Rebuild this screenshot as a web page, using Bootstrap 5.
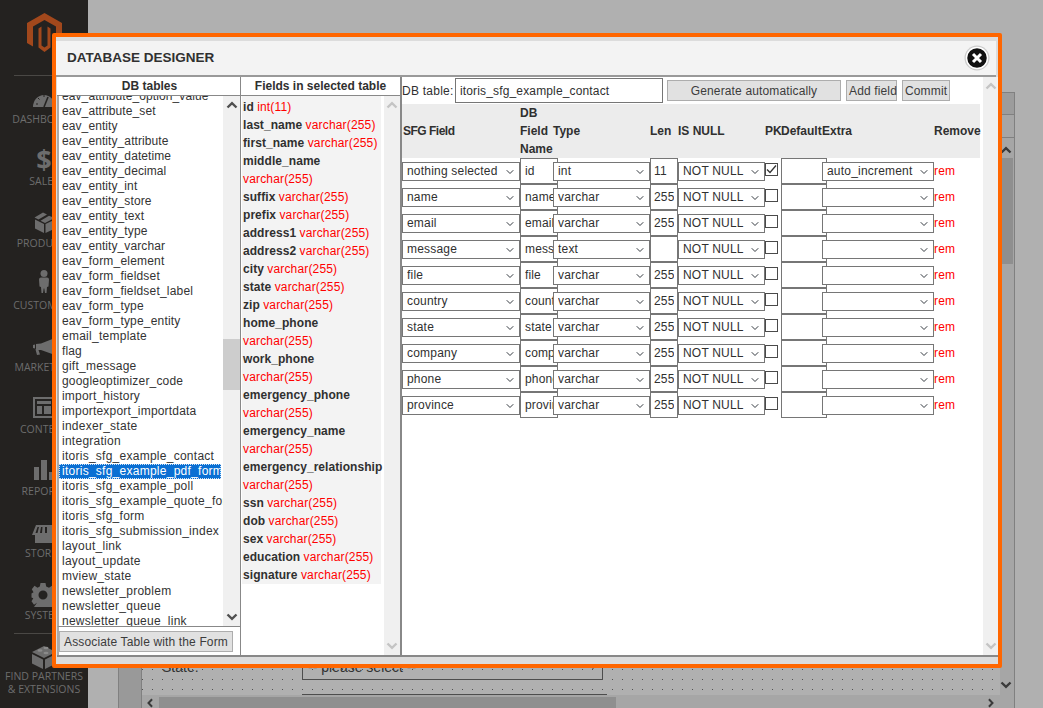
<!DOCTYPE html>
<html lang="en">
<head>
<meta charset="utf-8">
<title>Database Designer</title>
<link href="https://cdn.jsdelivr.net/npm/bootstrap@5.3.0/dist/css/bootstrap.min.css" rel="stylesheet">
<style>
html,body{height:708px;overflow:hidden}
body{background:#b0b0b0;font-family:"Liberation Sans",Arial,sans-serif;font-size:12px;color:#303030;width:1043px;position:relative}
.side{width:88px;height:708px;background:#242220;flex:none;font-family:"Open Sans",sans-serif;color:#6d6d6d;font-size:10.5px;text-align:center}
.side-logo{height:76px;padding-top:13px}
.side-logo svg{display:block}
.side-sep{height:1px;background:#4a4845;margin-left:14px;margin-top:-1px}
.side-item{height:62px;overflow:hidden}
.side-item svg{display:block;height:36px;width:88px}
.side-item span{display:block;line-height:16px;margin-top:-1px;white-space:nowrap}
.side-find{line-height:13px;white-space:nowrap;padding-top:2px}
.side-find svg{display:block;width:88px;height:34px}
.ic{fill:#6d6d6d}
.workspace{margin-top:92px;height:616px;flex:1 1 auto}
.gutter{width:30px;flex:none}
.strip{width:24px;background:#999;border-left:1px solid #808080;border-right:1px solid #808080;flex:none}
.editor{width:858px;flex:none}
.canvas{flex:1 1 auto;background-color:#b0b0b0;background-image:radial-gradient(circle at .5px .5px,#505050 .6px,transparent .8px);background-size:10px 10px;background-position:0 7px;overflow:hidden}
.canvas-label{width:160px;flex:none;padding-left:20px;line-height:26px;font-size:14px;color:#333;margin-bottom:15px}
.canvas-select.form-select{width:301px;height:26px;border:1px solid #4d4d4d;border-radius:0;background-color:transparent;font-size:14px;line-height:22px;padding:0 20px 0 5px;color:#333;margin-bottom:14px;background-position:right 4px center;background-size:10px 8px;font-family:inherit;box-shadow:none}
.canvas-line{width:305px;height:1px;background:#4d4d4d}
.hbar{height:13px;background:#a6a6a6;flex:none;padding-top:2px}
.hthumb{width:457px;background:#8f8f8f;margin-left:5px}
.hbar .chev{margin-top:1px}
.hbar .left{margin-left:4px}
.hbar .right{margin-right:5px}
.vbar{width:15px;flex:none;background:#a6a6a6;border-right:1px solid #808080}
.vhead{height:23px;border-bottom:1px solid #808080}
.vhead.dark{background:#9c9c9c;border-top:1px solid #808080}
.vthumb{height:106px;background:#8f8f8f;margin:0 1px 0 2px}
.chev{display:block;fill:none;stroke-width:2.4px}
.chev-dark{stroke:#3a3a3a}
.chev-mid{stroke:#505050}
.chev-light{stroke:#c4c4c4}
.vbar .up{margin:8px 0 4px 0}
.vbar .dn{margin-bottom:19px}
.dd{position:absolute;left:52px;top:33px;width:950px;height:635px;border:4px solid #f60;border-radius:2px;background:#dcdcdc;padding-top:4px;display:flex;flex-direction:column}
.dd-head{height:36px;flex:none;background:#f3f3f3;border-bottom:2px solid #999;margin-right:2px;padding:0 6px 0 11px}
.dd-title{font-size:13.5px;font-weight:700;color:#303030;padding-top:1px}
.dd-body{height:580px;flex:none;background:#fff;margin-left:1px;border-bottom:2px solid #888}
.col-tables{width:184px;flex:none;border-right:1px solid #888}
.col-fields{width:161px;flex:none;border-right:2px solid #888}
.col-head{height:19px;flex:none;border-bottom:1px solid #888;font-weight:700;text-align:center;line-height:18px;color:#303030}
.col-tables .col-head{padding-left:2px}
.tables-wrap{height:530px;flex:none;border-left:2px solid #aaa;overflow:hidden}
.tables-list{width:164px;flex:none;overflow:hidden;color:#333}
.tables-inner{margin-top:-7px}
.t-item{height:15px;line-height:15px;padding-left:3px;white-space:nowrap;width:162px;letter-spacing:.09px}
.t-item.ls{letter-spacing:.26px}
.t-item.ls2{letter-spacing:.19px}
.t-item.sel{background:#0a6fd3;color:#fff;overflow:hidden;outline:1px dotted #cfe3f7;outline-offset:-1px}
.sb{width:17px;flex:none;background:#f0f0f0;padding:5px 0}
.sb-thumb{height:51px;background:#cdcdcd;margin-top:230px}
.tables-foot{flex:1 1 auto;border-top:1px solid #888;border-left:2px solid #aaa;padding:4px 0 0 0}
.dd-btn{background:#e1e1e1;border:1px solid #adadad;border-radius:0;color:#3c3c3c;font-size:12px;line-height:14px;padding:0 2px;white-space:nowrap;letter-spacing:.14px}
.btn-assoc{width:174px;height:21px}
.fields-wrap{flex:1 1 auto;min-height:0}
.fields-list{width:139px;margin-left:1px;padding-top:2px;align-self:flex-start;background:#f3f3f3}
.f-line{line-height:18px;padding-left:1px}
.f-line b{color:#303030;letter-spacing:.06px}
.f-line span{color:#f00;letter-spacing:.16px}
.sb-f{width:16px;margin-left:3px}
.main{flex:1 1 auto;min-width:0}
.main-content{width:578px;flex:none}
.sb-m{width:15px;margin-left:3px}
.toolbar{height:27px}
.dd-input{border:1px solid #767676;border-radius:0;background:#fff;color:#303030;font-size:12px;padding:0 4px;height:26px;font-family:inherit;letter-spacing:.15px}
.tb-label{width:53px;white-space:nowrap;letter-spacing:.25px}
.tb-input{width:208px;height:25px}
.btn-gen{width:174px;height:21px;margin-left:4px}
.btn-add{width:51px;height:21px;margin-left:5px}
.btn-com{width:48px;height:21px;margin-left:5px}
.g-row{display:grid;grid-template-columns:118px 33px 97px 28px 87px 16px 41px 112px 46px}
.g-head{height:54px;background:#ececec;font-weight:700;align-items:center;line-height:18px;color:#303030;white-space:nowrap}
.g-first{padding-left:1px;letter-spacing:-.5px}
.g-name{white-space:normal;width:36px}
.g-rows .g-row{height:26px}
.s-box.form-select{height:19px;margin-top:4px;font-size:12px;line-height:17px;padding:0 14px 0 4px;border:1px solid #767676;border-radius:0;background-color:#fff;color:#303030;background-position:right 4px center;background-size:10px 8px;box-shadow:none;font-family:inherit;letter-spacing:.2px}
.i-name{width:38px}
.i-len{width:28px;padding:0 3px}
.i-def{width:46px}
.dd-check.form-check-input{width:13px;height:13px;margin:5px 0 0 0;border:1px solid #4a4a4a;border-radius:0;background-color:#fff}
.dd-check.form-check-input:checked{background-color:#fff;border-color:#4a4a4a;background-image:url("data:image/svg+xml,%3Csvg xmlns='http://www.w3.org/2000/svg' viewBox='0 0 13 13'%3E%3Cpath d='M2 6.5 5 9.5 11 2.5' fill='none' stroke='%23333' stroke-width='1.3'/%3E%3C/svg%3E");background-size:13px 13px}
.rem{color:#f00;line-height:26px;letter-spacing:.2px}
</style>
</head>
<body>
<svg width="0" height="0" class="position-absolute">
<symbol id="up" viewBox="0 0 12 8"><path d="M1.500 6.500 6 2.200 10.500 6.500"/></symbol>
<symbol id="down" viewBox="0 0 12 8"><path d="M1.500 1.500 6 5.800 10.500 1.500"/></symbol>
<symbol id="left" viewBox="0 0 8 12"><path d="M6.500 1.500 2.200 6 6.500 10.500"/></symbol>
<symbol id="right" viewBox="0 0 8 12"><path d="M1.500 1.500 5.800 6 1.500 10.500"/></symbol>
</svg>
<div class="d-flex">
<aside class="side">
  <div class="side-logo">
    <svg width="88" height="40" viewBox="0 13 88 40"><path fill="#a2481c" d="M44.500 13 62 23V43L56 46.500V26.500L44.500 20 33 26.500V46.500L27 43V23Z"/><path fill="#a2481c" d="M38.500 28.500 41.500 26.500V45.500L44.500 47.500 47.500 45.500V26.500L50.500 28.500V47.500L44.500 52 38.500 47.500Z"/></svg>
  </div>
  <div class="side-sep"></div>
  <div class="side-item"><svg viewBox="0 0 88 36"><path class="ic" d="M33 31a11 12 0 0 1 22 0Z"/><path d="M44 31 48 21" stroke="#242220" stroke-width="1.600"/><path d="M36 28h2M38 22l1.500 1.500M44 19v2" stroke="#242220" stroke-width="1"/></svg><span>DASHBOARD</span></div>
  <div class="side-item"><svg viewBox="0 0 88 36"><text class="ic" x="44" y="31" text-anchor="middle" font-family="Open Sans" font-weight="700" font-size="27">$</text></svg><span>SALES</span></div>
  <div class="side-item"><svg viewBox="0 0 88 36"><path class="ic" d="M35 19.500 44 24V33L35 28.500ZM45.500 24 55 19.500V28.500L45.500 33ZM34.500 17.500 43 12.500 47 14.500 38.500 19.500ZM40.500 20.800 49 15.800 54.500 18 45 23Z"/></svg><span>PRODUCTS</span></div>
  <div class="side-item"><svg viewBox="0 0 88 36"><circle class="ic" cx="44" cy="11.500" r="3.500"/><path class="ic" d="M39 17.500Q39 15.500 41 15.500H47Q49 15.500 49 17.500L48.500 24.500 47 25 46.500 31H45L44.300 26.500H43.700L43 31H41.500L41 25 39.500 24.500Z"/></svg><span>CUSTOMERS</span></div>
  <div class="side-item"><svg viewBox="0 0 88 36"><path class="ic" d="M33 21 35 20.500V24.500L33 24ZM36 20 41 19.500 55 14V31L41 26 38.500 26 40 30.500 37 31 35.500 25.500 36 25Z"/></svg><span>MARKETING</span></div>
  <div class="side-item"><svg viewBox="0 0 88 36"><path class="ic" fill-rule="evenodd" d="M33 11H55V32H33ZM35 13V30H53V13ZM37 15H51V18H37ZM37 20H42V28H37ZM44 20H51V28H44Z"/></svg><span>CONTENT</span></div>
  <div class="side-item"><svg viewBox="0 0 88 36"><path class="ic" d="M34 19H39V32H34ZM41 12H47V32H41ZM49 24H55V32H49Z"/></svg><span>REPORTS</span></div>
  <div class="side-item"><svg viewBox="0 0 88 36"><path class="ic" d="M36 15H56V33H35V25H32ZM37.500 17 35.500 23H37.500L39 17ZM41 17 40 23H42L42.500 17ZM45 17V23H47V17Z"/></svg><span>STORES</span></div>
  <div class="side-item"><svg viewBox="0 0 88 36"><path class="ic" fill-rule="evenodd" d="M40.500 11H45.500L46.200 14.500 49 15.800 52 13.800 55.500 17.300 53.500 20.300 54.700 23 58 23.700V28.700L54.700 29.400 53.500 32 55.500 35H34L37 30.800 34 32.800 31.500 29.300 33.300 26.300 31.500 25.500V21.500L33.500 20.300 31.800 17.300 34.500 13.800 37.500 15.800 39.800 14.500ZM43 18.500A4.500 4.500 0 1 0 43 27.500 4.500 4.500 0 1 0 43 18.500Z"/></svg><span>SYSTEM</span></div>
  <div class="side-sep"></div>
  <div class="side-find">
    <svg viewBox="0 0 88 34"><path class="ic" d="M32 16 44 10 56 16 44 22ZM32 18 43 23.500V33L32 27.500ZM45 23.500 56 18V27.500L45 33Z"/><ellipse cx="40" cy="14.500" rx="2.500" ry="1.200" fill="#8a8a8a"/><ellipse cx="46" cy="12" rx="2.500" ry="1.200" fill="#8a8a8a"/><ellipse cx="46" cy="17" rx="2.500" ry="1.200" fill="#8a8a8a"/></svg>
    <div>FIND PARTNERS</div>
    <div>&amp; EXTENSIONS</div>
  </div>
</aside>
<div class="workspace d-flex">
  <div class="gutter"></div>
  <div class="strip"></div>
  <div class="editor d-flex flex-column">
    <div class="canvas d-flex justify-content-start align-items-end">
      <div class="canvas-label">State:</div>
      <div>
        <select class="form-select canvas-select"><option>-- please select --</option></select>
        <div class="canvas-line"></div>
      </div>
    </div>
    <div class="hbar d-flex align-items-stretch">
      <svg class="chev chev-dark left" width="8" height="10"><use href="#left"/></svg>
      <div class="hthumb"></div>
      <div class="flex-grow-1"></div>
      <svg class="chev chev-dark right" width="8" height="10"><use href="#right"/></svg>
    </div>
  </div>
  <div class="vbar d-flex flex-column">
    <div class="vhead dark"></div>
    <div class="vhead"></div>
    <svg class="chev chev-dark up" width="12" height="8"><use href="#up"/></svg>
    <div class="vthumb"></div>
    <div class="flex-grow-1"></div>
    <svg class="chev chev-dark dn" width="12" height="8"><use href="#down"/></svg>
  </div>
</div>
</div>

<div class="dd">
  <div class="dd-head d-flex align-items-center justify-content-between">
    <div class="dd-title">DATABASE DESIGNER</div>
    <svg width="26" height="26" viewBox="0 0 26 26"><circle cx="13" cy="13" r="12.500" fill="#000" fill-opacity=".16"/><circle cx="13" cy="13" r="10.500" fill="#111" stroke="#fff" stroke-width="1.500"/><path d="M9 9 17 17M17 9 9 17" stroke="#fff" stroke-width="3"/></svg>
  </div>
  <div class="dd-body d-flex">
    <div class="col-tables d-flex flex-column">
      <div class="col-head">DB tables</div>
      <div class="tables-wrap d-flex">
        <div class="tables-list"><div class="tables-inner">
          <div class="t-item">eav_attribute_option_value</div>
          <div class="t-item">eav_attribute_set</div>
          <div class="t-item">eav_entity</div>
          <div class="t-item">eav_entity_attribute</div>
          <div class="t-item">eav_entity_datetime</div>
          <div class="t-item">eav_entity_decimal</div>
          <div class="t-item">eav_entity_int</div>
          <div class="t-item">eav_entity_store</div>
          <div class="t-item">eav_entity_text</div>
          <div class="t-item">eav_entity_type</div>
          <div class="t-item">eav_entity_varchar</div>
          <div class="t-item ls2">eav_form_element</div>
          <div class="t-item ls2">eav_form_fieldset</div>
          <div class="t-item ls2">eav_form_fieldset_label</div>
          <div class="t-item ls2">eav_form_type</div>
          <div class="t-item ls2">eav_form_type_entity</div>
          <div class="t-item ls">email_template</div>
          <div class="t-item">flag</div>
          <div class="t-item ls">gift_message</div>
          <div class="t-item ls2">googleoptimizer_code</div>
          <div class="t-item ls2">import_history</div>
          <div class="t-item ls2">importexport_importdata</div>
          <div class="t-item ls">indexer_state</div>
          <div class="t-item ls">integration</div>
          <div class="t-item ls">itoris_sfg_example_contact</div>
          <div class="t-item ls sel">itoris_sfg_example_pdf_form</div>
          <div class="t-item ls">itoris_sfg_example_poll</div>
          <div class="t-item ls">itoris_sfg_example_quote_form</div>
          <div class="t-item ls">itoris_sfg_form</div>
          <div class="t-item ls">itoris_sfg_submission_index</div>
          <div class="t-item ls">layout_link</div>
          <div class="t-item ls">layout_update</div>
          <div class="t-item ls">mview_state</div>
          <div class="t-item ls">newsletter_problem</div>
          <div class="t-item ls">newsletter_queue</div>
          <div class="t-item ls">newsletter_queue_link</div>
          <div class="t-item ls">newsletter_subscriber</div>
        </div></div>
        <div class="sb d-flex flex-column align-items-center">
          <svg class="chev chev-mid" width="12" height="8"><use href="#up"/></svg>
          <div class="flex-grow-1 w-100"><div class="sb-thumb"></div></div>
          <svg class="chev chev-mid" width="12" height="8"><use href="#down"/></svg>
        </div>
      </div>
      <div class="tables-foot"><button type="button" class="dd-btn btn-assoc">Associate Table with the Form</button></div>
    </div>
    <div class="col-fields d-flex flex-column">
      <div class="col-head">Fields in selected table</div>
      <div class="fields-wrap d-flex">
        <div class="fields-list">
          <div class="f-line"><b>id</b> <span>int(11)</span></div>
          <div class="f-line"><b>last_name</b> <span>varchar(255)</span></div>
          <div class="f-line"><b>first_name</b> <span>varchar(255)</span></div>
          <div class="f-line"><b>middle_name</b> <span>varchar(255)</span></div>
          <div class="f-line"><b>suffix</b> <span>varchar(255)</span></div>
          <div class="f-line"><b>prefix</b> <span>varchar(255)</span></div>
          <div class="f-line"><b>address1</b> <span>varchar(255)</span></div>
          <div class="f-line"><b>address2</b> <span>varchar(255)</span></div>
          <div class="f-line"><b>city</b> <span>varchar(255)</span></div>
          <div class="f-line"><b>state</b> <span>varchar(255)</span></div>
          <div class="f-line"><b>zip</b> <span>varchar(255)</span></div>
          <div class="f-line"><b>home_phone</b> <span>varchar(255)</span></div>
          <div class="f-line"><b>work_phone</b> <span>varchar(255)</span></div>
          <div class="f-line"><b>emergency_phone</b> <span>varchar(255)</span></div>
          <div class="f-line"><b>emergency_name</b> <span>varchar(255)</span></div>
          <div class="f-line"><b>emergency_relationship</b> <span>varchar(255)</span></div>
          <div class="f-line"><b>ssn</b> <span>varchar(255)</span></div>
          <div class="f-line"><b>dob</b> <span>varchar(255)</span></div>
          <div class="f-line"><b>sex</b> <span>varchar(255)</span></div>
          <div class="f-line"><b>education</b> <span>varchar(255)</span></div>
          <div class="f-line"><b>signature</b> <span>varchar(255)</span></div>
        </div>
        <div class="sb sb-f d-flex flex-column align-items-center">
          <svg class="chev chev-light" width="12" height="8"><use href="#up"/></svg>
          <div class="flex-grow-1"></div>
          <svg class="chev chev-light" width="12" height="8"><use href="#down"/></svg>
        </div>
      </div>
    </div>
    <div class="main d-flex">
      <div class="main-content">
        <div class="toolbar d-flex align-items-center">
          <div class="tb-label">DB table:</div>
          <input class="dd-input tb-input" type="text" value="itoris_sfg_example_contact">
          <button type="button" class="dd-btn btn-gen">Generate automatically</button>
          <button type="button" class="dd-btn btn-add">Add field</button>
          <button type="button" class="dd-btn btn-com">Commit</button>
        </div>
        <div class="g-row g-head">
          <div class="g-first">SFG Field</div><div class="g-name">DB Field Name</div><div>Type</div><div>Len</div><div>IS NULL</div><div>PK</div><div>Default</div><div>Extra</div><div>Remove</div>
        </div>
        <div class="g-rows">
          <div class="g-row"><select class="form-select s-box"><option>nothing selected</option></select><input class="dd-input i-name" value="id"><select class="form-select s-box"><option>int</option></select><input class="dd-input i-len" value="11"><select class="form-select s-box"><option>NOT NULL</option></select><input class="form-check-input dd-check" type="checkbox" checked><input class="dd-input i-def"><select class="form-select s-box"><option>auto_increment</option></select><div class="rem">rem</div></div>
          <div class="g-row"><select class="form-select s-box"><option>name</option></select><input class="dd-input i-name" value="name"><select class="form-select s-box"><option>varchar</option></select><input class="dd-input i-len" value="255"><select class="form-select s-box"><option>NOT NULL</option></select><input class="form-check-input dd-check" type="checkbox"><input class="dd-input i-def"><select class="form-select s-box"><option></option></select><div class="rem">rem</div></div>
          <div class="g-row"><select class="form-select s-box"><option>email</option></select><input class="dd-input i-name" value="email"><select class="form-select s-box"><option>varchar</option></select><input class="dd-input i-len" value="255"><select class="form-select s-box"><option>NOT NULL</option></select><input class="form-check-input dd-check" type="checkbox"><input class="dd-input i-def"><select class="form-select s-box"><option></option></select><div class="rem">rem</div></div>
          <div class="g-row"><select class="form-select s-box"><option>message</option></select><input class="dd-input i-name" value="message"><select class="form-select s-box"><option>text</option></select><input class="dd-input i-len" value=""><select class="form-select s-box"><option>NOT NULL</option></select><input class="form-check-input dd-check" type="checkbox"><input class="dd-input i-def"><select class="form-select s-box"><option></option></select><div class="rem">rem</div></div>
          <div class="g-row"><select class="form-select s-box"><option>file</option></select><input class="dd-input i-name" value="file"><select class="form-select s-box"><option>varchar</option></select><input class="dd-input i-len" value="255"><select class="form-select s-box"><option>NOT NULL</option></select><input class="form-check-input dd-check" type="checkbox"><input class="dd-input i-def"><select class="form-select s-box"><option></option></select><div class="rem">rem</div></div>
          <div class="g-row"><select class="form-select s-box"><option>country</option></select><input class="dd-input i-name" value="country"><select class="form-select s-box"><option>varchar</option></select><input class="dd-input i-len" value="255"><select class="form-select s-box"><option>NOT NULL</option></select><input class="form-check-input dd-check" type="checkbox"><input class="dd-input i-def"><select class="form-select s-box"><option></option></select><div class="rem">rem</div></div>
          <div class="g-row"><select class="form-select s-box"><option>state</option></select><input class="dd-input i-name" value="state"><select class="form-select s-box"><option>varchar</option></select><input class="dd-input i-len" value="255"><select class="form-select s-box"><option>NOT NULL</option></select><input class="form-check-input dd-check" type="checkbox"><input class="dd-input i-def"><select class="form-select s-box"><option></option></select><div class="rem">rem</div></div>
          <div class="g-row"><select class="form-select s-box"><option>company</option></select><input class="dd-input i-name" value="company"><select class="form-select s-box"><option>varchar</option></select><input class="dd-input i-len" value="255"><select class="form-select s-box"><option>NOT NULL</option></select><input class="form-check-input dd-check" type="checkbox"><input class="dd-input i-def"><select class="form-select s-box"><option></option></select><div class="rem">rem</div></div>
          <div class="g-row"><select class="form-select s-box"><option>phone</option></select><input class="dd-input i-name" value="phone"><select class="form-select s-box"><option>varchar</option></select><input class="dd-input i-len" value="255"><select class="form-select s-box"><option>NOT NULL</option></select><input class="form-check-input dd-check" type="checkbox"><input class="dd-input i-def"><select class="form-select s-box"><option></option></select><div class="rem">rem</div></div>
          <div class="g-row"><select class="form-select s-box"><option>province</option></select><input class="dd-input i-name" value="province"><select class="form-select s-box"><option>varchar</option></select><input class="dd-input i-len" value="255"><select class="form-select s-box"><option>NOT NULL</option></select><input class="form-check-input dd-check" type="checkbox"><input class="dd-input i-def"><select class="form-select s-box"><option></option></select><div class="rem">rem</div></div>
        </div>
      </div>
      <div class="sb sb-m d-flex flex-column align-items-center">
        <svg class="chev chev-light" width="12" height="8"><use href="#up"/></svg>
        <div class="flex-grow-1"></div>
        <svg class="chev chev-light" width="12" height="8"><use href="#down"/></svg>
      </div>
    </div>
  </div>
</div>
<script src="https://cdn.jsdelivr.net/npm/bootstrap@5.3.0/dist/js/bootstrap.bundle.min.js"></script>
</body>
</html>
